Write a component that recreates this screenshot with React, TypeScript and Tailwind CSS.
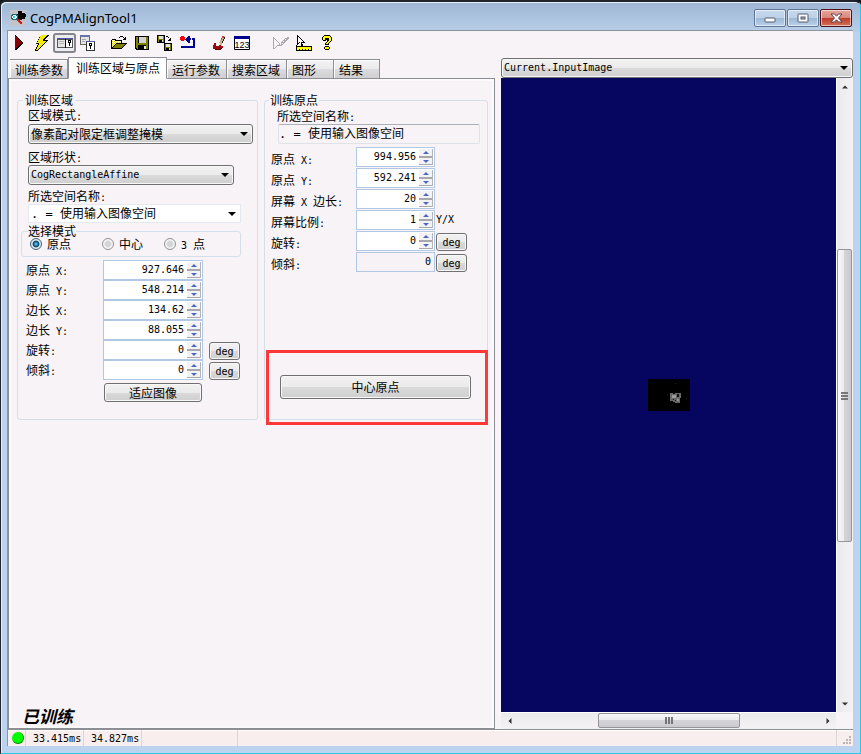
import { useState } from 'react';
import type { ReactNode } from 'react';

const tabs = [
  { label: '训练参数', width: 'w-[58px]' },
  { label: '训练区域与原点', width: 'w-[99px]' },
  { label: '运行参数', width: 'w-[60px]' },
  { label: '搜索区域', width: 'w-[60px]' },
  { label: '图形', width: 'w-[47px]' },
  { label: '结果', width: 'w-[46px]' },
];

const regionRows = [
  { id: 'region-x', label: '原点 X:', value: '927.646' },
  { id: 'region-y', label: '原点 Y:', value: '548.214' },
  { id: 'region-side-x', label: '边长 X:', value: '134.62' },
  { id: 'region-side-y', label: '边长 Y:', value: '88.055' },
  { id: 'region-rotation', label: '旋转:', value: '0', unit: 'deg' },
  { id: 'region-skew', label: '倾斜:', value: '0', unit: 'deg' },
];

const originRows = [
  { id: 'origin-x', label: '原点 X:', value: '994.956' },
  { id: 'origin-y', label: '原点 Y:', value: '592.241' },
  { id: 'origin-screen-x', label: '屏幕 X 边长:', value: '20' },
  { id: 'origin-aspect', label: '屏幕比例:', value: '1', suffix: 'Y/X' },
  { id: 'origin-rotation', label: '旋转:', value: '0', unit: 'deg' },
  { id: 'origin-skew', label: '倾斜:', value: '0', unit: 'deg', readOnly: true },
];

const MONO = "font-['DejaVu_Sans_Mono','Noto_Sans_CJK_SC',monospace]";

const buttonFace =
  'rounded-[3px] border border-[#707070] bg-[linear-gradient(#f3f1f2_0%,#ebebeb_50%,#dadada_50%,#cfcfcf_100%)] shadow-[inset_0_0_0_1px_#f8f8f8]';

// Latin runs are set smaller so they take half the width of a CJK character
function Mixed({ children }: { children: string }) {
  const runs = children.match(/[\x20-\x7e]+|[^\x20-\x7e]+/g) ?? [];
  return (
    <>
      {runs.map((run, i) =>
        run.charCodeAt(0) < 128 ? (
          <span key={i} className={`${MONO} text-[10px] leading-none whitespace-pre`}>{run}</span>
        ) : (
          <span key={i}>{run}</span>
        )
      )}
    </>
  );
}

function Icon({ children, size = 16 }: { children: ReactNode; size?: number }) {
  return (
    <svg className="shrink-0" width={size} height={size} viewBox="0 0 16 16" shapeRendering="crispEdges" aria-hidden="true">
      {children}
    </svg>
  );
}

function AppIcon() {
  return (
    <Icon>
      <path d="M0 0h16v16H0z" fill="#c4c4c8" />
      <path d="M8 1h4v2h3v1h1v3h-1v2h-3v1H9V9H7V4h1z" fill="#000" />
      <path d="M2 4h5v1h1v4H7v1H2V9H1V5h1z" fill="#186878" />
      <path d="M3 5h3v1h1v2H6v1H3V8H2V6h1z" fill="#e8ffff" />
      <path d="M3 6h2v2H3z" fill="#3fd0e0" />
      <path d="M7 9h2v1h1v1h1v1h1v2h-2v-1H9v-1H8v-1H7z" fill="#d01818" />
    </Icon>
  );
}

const icons = {
  run: (
    <Icon>
      <path d="M4 0h1v1h1v1h1v1h1v1h1v1h1v1h1v1h1v2h-1v1h-1v1H9v1H8v1H7v1H6v1H4z" fill="#000" />
      <path d="M4 1h1v1h1v1h1v1h1v1h1v1h1v1h1v1h-1v1H9v1H8v1H7v1H6v1H5v1H4z" fill="#8b0000" />
    </Icon>
  ),
  electric: (
    <Icon>
      <path d="M7 0h8v1h-1v1h-1v1h-1v1h-1v1h3v1h-1v1h-1v1h-1v1h-1v1H9v1H8v1H7v1H6v1H5v1H4v1H1v-2h1v-2h1v-2h1V9H2V8h1V6h1V4h1V2h1V1h1z" fill="#000" />
      <path d="M7 0h6v1h-1v1h-1v1h-1v1H9v2h3v1h-1v1h-1v1H9v1H8v1H7v1H6v1H5v1H4v1H2v-1h1v-2h1v-2h1V8H3V7h1V5h1V3h1V1h1z" fill="#f4ec00" />
    </Icon>
  ),
  panel: (
    <Icon>
      <path d="M0 3h16v10H0z" fill="#555" />
      <path d="M1 5h8v7H1z" fill="#e4e4e4" />
      <path d="M0 3h16v1H0z" fill="#4a5aa0" />
      <path d="M2 6h5v1H2zM2 8h5v1H2z" fill="#b4b4b4" />
      <path d="M9 5h6v7H9z" fill="#fff" />
      <path d="M8 4h1v9H8z" fill="#101010" />
      <path d="M11 5h3v3h-1v3h-1V8h-1z" fill="#000" />
      <path d="M12 6h1v1h-1z" fill="#fff" />
    </Icon>
  ),
  floating: (
    <Icon>
      <path d="M0 0h10v10H0z" fill="#666" />
      <path d="M0 0h10v2H0z" fill="#6474a8" />
      <path d="M1 2h8v7H1z" fill="#e4e4e4" />
      <path d="M2 4h4v1H2zM2 6h3v1H2z" fill="#a8a8a8" />
      <path d="M6 6h9v10H6z" fill="#333" />
      <path d="M6 6h9v1H6z" fill="#4c5c98" />
      <path d="M7 7h7v8H7z" fill="#fff" />
      <path d="M9 8h3v3h-1v3h-1v-3H9z" fill="#000" />
      <path d="M10 9h1v1h-1z" fill="#fff" />
    </Icon>
  ),
  open: (
    <Icon>
      <path d="M0 5h1V4h4v1h6v3h5v1h-1v1h-1v1h-1v1h-1v1h-1v1H0z" fill="#000" />
      <path d="M1 5h3v1h6v2H5v1H4v1H3v1H2v1H1z" fill="#ffffb0" />
      <path d="M1 6h1v1H1zM3 6h1v1H3zM2 7h1v1H2zM4 7h1v1H4zM6 7h1v1H6zM8 7h1v1H8zM1 8h1v1H1zM3 8h1v1H3zM2 9h1v1H2zM1 10h1v1H1z" fill="#e8e000" />
      <path d="M5 9h9v1h-1v1h-1v1h-1v1H2v-1h1v-1h1v-1h1z" fill="#808000" />
      <path d="M9 1h3v1H9zM8 2h1v1H8zM12 2h1v1h-1zM14 2h1v3h-3V4h1V3h1z" fill="#000" />
    </Icon>
  ),
  save: (
    <Icon>
      <path d="M1 1h14v14H2v-1H1z" fill="#000" />
      <path d="M2 2h12v12H3v-1H2z" fill="#808000" />
      <path d="M4 1h8v7H4z" fill="#000" />
      <path d="M5 2h7v6H5z" fill="#d4d4cc" />
      <path d="M4 10h8v4H4z" fill="#000" />
      <path d="M10 11h2v3h-2z" fill="#e8e8e8" />
    </Icon>
  ),
  saveAs: (
    <Icon>
      <path d="M0 0h8v8H0zM7 8h8v8H7z" fill="#000" />
      <path d="M1 1h6v6H1zM8 9h6v6H8z" fill="#808000" />
      <path d="M2 1h4v3H2zM9 9h4v3H9z" fill="#e0e0dc" />
      <path d="M2 5h4v2H2zM9 13h4v2H9z" fill="#000" />
      <path d="M5 5h1v2H5zM12 13h1v2h-1z" fill="#e0e0dc" />
      <path d="M9 1h2v1H9zM11 2h1v1h-1zM13 3h1v3h-3V5h1V4h1z" fill="#000" />
    </Icon>
  ),
  reset: (
    <Icon>
      <path d="M1 1h3v1h1v3H4v1H1V5H0V2h1z" fill="#f00" />
      <path d="M8 1h2v2h1v2h-1v3H8V7H7V6H6V5H5V4h1V3h1V2h1zM12 3h3v10H1v-2h12V5h-1z" fill="#000090" />
    </Icon>
  ),
  brush: (
    <Icon>
      <path d="M12 1h2v3h-1v2h-1v2h-1v2H9V8H8V7h1V5h1V3h1V2h1z" fill="#d0b088" />
      <path d="M11 1h2v2h-2zM10 3h1v2h-1z" fill="#d04040" />
      <path d="M13 2h1v2h-1zM12 4h1v2h-1zM11 6h1v2h-1z" fill="#222" />
      <path d="M3 8h2v3h3v-1h2v1h2v2h-1v1h-1v1H4v-1H2v-4h1z" fill="#980c10" />
      <path d="M4 14h5v1H4zM9 13h2v1H9z" fill="#5a0000" />
    </Icon>
  ),
  results: (
    <svg className="shrink-0" width="16" height="16" viewBox="0 0 16 16" aria-hidden="true">
      <path d="M.5 2.500h15v12H.5z" fill="#fff" stroke="#000" />
      <path d="M0 1h16v3H0z" fill="#00008b" />
      <text x="8" y="12.500" textAnchor="middle" fontSize="9" fontFamily="Liberation Sans, sans-serif" fill="#000">123</text>
    </svg>
  ),
  edit: (
    <Icon>
      <path d="M0 2h1v12H0zM1 3h1v1H1zM2 4h1v1H2zM3 5h1v1H3zM4 6h1v1H4zM5 7h1v1H5zM6 8h1v3H6zM1 13h1v1H1zM2 12h1v1H2zM3 11h1v1H3zM4 10h2v1H4z" fill="#aaa" />
      <path d="M7 10h1V7h1V6h1V5h1V4h1V3h2V2h2v2h-1v1h-1v1h-1v1h-1v1h-1v1h-1v1H9v1H7z" fill="#aaa" />
      <path d="M12 4h1v1h-1zM10 6h1v1h-1zM9 8h1v1H9z" fill="#fff" />
    </Icon>
  ),
  pointer: (
    <Icon>
      <path d="M1 0h1v1h1v1h1v1h1v1h1v1h1v1h1v1h1v1H6v1h1v2H5V9H4V8H3v1H2v1H1z" fill="#000" />
      <path d="M2 2h1v1h1v1h1v1h1v1h1v1H5v2H4V7H3v1H2z" fill="#fff" />
      <path d="M0 10h1v1h15v5H0z" fill="#000" />
      <path d="M1 12h14v3H1z" fill="#ff0" />
      <path d="M3 14h1v1H3zM6 14h1v1H6zM9 14h1v1H9zM12 14h1v1h-1z" fill="#000" />
    </Icon>
  ),
  help: (
    <Icon>
      <path d="M5 0h6v1h1v1h1v4h-1v1h-1v1h-1v2H6V8h1V7h1V5H7v1H4V5H3V2h1V1h1zM6 11h4v1h1v2h-1v1H6v-1H5v-2h1z" fill="#000" />
      <path d="M5 1h6v1h1v4h-1v1h-1v1H9v1H7V8h1V7h1V6h1V3H6v2H4V2h1zM6 12h4v2H6z" fill="#ff0" />
    </Icon>
  ),
};

const toolbar = [
  { name: '运行', icon: icons.run, margin: '' },
  { name: '自动运行', icon: icons.electric, margin: '' },
  { name: '显示面板', icon: icons.panel, margin: '', pressed: true },
  { name: '浮动窗口', icon: icons.floating, margin: '' },
  { name: '打开', icon: icons.open, margin: 'ml-2' },
  { name: '保存', icon: icons.save, margin: '' },
  { name: '另存为', icon: icons.saveAs, margin: '' },
  { name: '重置', icon: icons.reset, margin: '' },
  { name: '绘制', icon: icons.brush, margin: 'ml-2' },
  { name: '数值', icon: icons.results, margin: '' },
  { name: '编辑', icon: icons.edit, margin: 'ml-4' },
  { name: '提示', icon: icons.pointer, margin: '' },
  { name: '帮助', icon: icons.help, margin: '' },
];

function TitleBar() {
  const face = 'flex h-[18px] w-8 items-center justify-center rounded-[2px] border shadow-[inset_0_0_0_1px_rgba(255,255,255,0.55)]';
  const plain = 'border-[#5e7796] bg-[linear-gradient(#c5d8ec_0%,#bdd1e7_48%,#9db8d5_50%,#b9d0ea_100%)]';
  return (
    <header className="flex h-7 items-center justify-between pt-1 pr-px pl-[3px]">
      <div className="flex items-center gap-1">
        <AppIcon />
        <h1 className="font-['Noto_Sans',sans-serif] text-[13px] leading-4 text-black">CogPMAlignTool1</h1>
      </div>
      <div className="flex gap-px">
        <button aria-label="最小化" className={`${face} ${plain}`}>
          <svg className="mt-1" width="12" height="6" viewBox="0 0 12 6"><rect x="1" y="1" width="10" height="4" rx=".5" fill="#fff" stroke="#555a6c" /></svg>
        </button>
        <button aria-label="最大化" className={`${face} ${plain}`}>
          <svg width="12" height="10" viewBox="0 0 12 10">
            <rect x="1" y="1" width="10" height="8" rx=".5" fill="#fff" stroke="#555a6c" />
            <rect x="4" y="4" width="4" height="2" fill="#9db8d5" stroke="#555a6c" />
          </svg>
        </button>
        <button aria-label="关闭" className={`${face} border-[#4c1018] bg-[linear-gradient(#e8a79b_0%,#d9877a_48%,#bd3a28_50%,#d27358_100%)]`}>
          <svg width="13" height="10" viewBox="0 0 13 10">
            <path d="M1 1h3.500l2 2.200 2-2.200H12L8.500 5 12 9H8.500l-2-2.200-2 2.200H1l3.500-4z" fill="#fff" stroke="#5a4450" />
          </svg>
        </button>
      </div>
    </header>
  );
}

function Arrow({ dir = 'down', size = 8, className = '' }: { dir?: string; size?: number; className?: string }) {
  const paths: Record<string, string> = {
    down: 'M0 2h8L4 6z',
    up: 'M0 6h8L4 2z',
    left: 'M6 0v8L2 4z',
    right: 'M2 0v8l4-4z',
  };
  return (
    <svg className={className} width={size} height={size} viewBox="0 0 8 8" aria-hidden="true">
      <path d={paths[dir]} fill="currentColor" />
    </svg>
  );
}

function Dropdown({ id, value, label, className = '' }: { id: string; value: string; label?: string; className?: string }) {
  return (
    <div className={`relative ${className}`}>
      <select id={id} aria-label={label} className="block h-full w-full appearance-none rounded-[inherit] bg-transparent pr-5 pl-[2px] outline-none">
        <option>{value}</option>
      </select>
      <Arrow className="pointer-events-none absolute top-1/2 right-1 -translate-y-1/2" />
    </div>
  );
}

function Spinner({ id, value, readOnly }: { id: string; value: string; readOnly?: boolean }) {
  const step = 'flex h-2 w-full items-center justify-center bg-[#f3f2f5] text-[#4c66c4]';
  return (
    <div className={`flex h-5 border border-[#b0c8e4] ${readOnly ? 'bg-[#f6f2f6]' : 'bg-white'}`}>
      <input
        id={id}
        defaultValue={value}
        readOnly={readOnly}
        className={`${MONO} w-0 min-w-0 flex-1 bg-transparent pr-[3px] text-right text-[10px] outline-none`}
      />
      {!readOnly && (
        <div className="my-px mr-px flex w-[14px] flex-col justify-between border-r border-[#b4b4b8]">
          <button aria-label="增加" className={`${step} border-b border-[#a8a8ac]`}>
            <svg width="6" height="3" viewBox="0 0 6 3"><path d="M0 3h6L3 0z" fill="currentColor" /></svg>
          </button>
          <button aria-label="减少" className={`${step} border-y border-[#a8a8ac]`}>
            <svg width="6" height="3" viewBox="0 0 6 3"><path d="M0 0h6L3 3z" fill="currentColor" /></svg>
          </button>
        </div>
      )}
    </div>
  );
}

function DegButton() {
  return <button className={`${buttonFace} ${MONO} mt-[2px] h-[18px] w-[31px] pt-px text-[10px] leading-4`}>deg</button>;
}

function RegionGroup() {
  const [mode, setMode] = useState('原点');
  return (
    <fieldset className="w-[241px] rounded-[3px] border border-[#d5dfe9] pr-1 pb-[17px] pl-[3px]">
      <legend className="ml-[2px] px-[2px] leading-3">训练区域</legend>
      <div className="pl-[7px]">
        <label htmlFor="region-mode" className="mt-px block h-4 leading-4"><Mixed>区域模式:</Mixed></label>
        <Dropdown id="region-mode" value="像素配对限定框调整掩模" className={`${buttonFace} mt-px h-5`} />
        <label htmlFor="region-shape" className="mt-[5px] block h-4 leading-4"><Mixed>区域形状:</Mixed></label>
        <Dropdown id="region-shape" value="CogRectangleAffine" className={`${buttonFace} ${MONO} mr-[19px] h-5 text-[10px]`} />
        <label htmlFor="region-space" className="mt-[3px] block h-4 leading-4"><Mixed>所选空间名称:</Mixed></label>
        <Dropdown id="region-space" value=". = 使用输入图像空间" className={`${MONO} mr-3 h-[19px] border border-[#e4e8f0] bg-white`} />
      </div>
      <fieldset className="mt-[2px] mr-3 flex rounded-[3px] border border-[#d5dfe9] pb-[5px] pl-2">
        <legend className="ml-[-2px] leading-3">选择模式</legend>
        {['原点', '中心', '3 点'].map((item, i) => (
          <label key={item} className={`flex h-[14px] items-center gap-[5px] ${i < 2 ? (i === 0 ? 'w-[72px]' : 'w-[62px]') : ''}`}>
            <input
              type="radio"
              name="mode"
              checked={mode === item}
              onChange={() => setMode(item)}
              className="h-3 w-3 appearance-none rounded-full border border-[#8e8f8f] bg-[radial-gradient(circle,#d2d4d8_35%,#f8f8f8_60%)] checked:border-[#43606f] checked:bg-[radial-gradient(circle,#46b4e8_10%,#0b3f63_40%,#dfeaf2_55%)]"
            />
            <span><Mixed>{item}</Mixed></span>
          </label>
        ))}
      </fieldset>
      <div className="mt-[3px] pl-[5px]">
        {regionRows.map((row) => (
          <div key={row.id} className="flex h-5">
            <label htmlFor={row.id} className="w-[77px] leading-5"><Mixed>{row.label}</Mixed></label>
            <div className="mr-[6px] w-[100px]"><Spinner id={row.id} value={row.value} /></div>
            {row.unit && <DegButton />}
          </div>
        ))}
        <button className={`${buttonFace} mt-[3px] ml-[78px] block h-[19px] w-[98px] leading-4`}>适应图像</button>
      </div>
    </fieldset>
  );
}

function OriginGroup() {
  return (
    <fieldset className="flex w-[224px] flex-col rounded-[3px] border border-[#d5dfe9] px-[6px]">
      <legend className="ml-[-2px] px-px leading-3">训练原点</legend>
      <label htmlFor="origin-space" className="mt-[2px] ml-[6px] h-4 leading-4"><Mixed>所选空间名称:</Mixed></label>
      <input
        id="origin-space"
        readOnly
        defaultValue=". = 使用输入图像空间"
        className={`${MONO} mr-px ml-[7px] h-5 rounded-[2px] border border-[#e0e2ea] border-t-[#aeb0b8] bg-transparent pb-1 outline-none`}
      />
      <div className="mt-[3px] flex flex-col gap-px">
        {originRows.map((row) => (
          <div key={row.id} className="flex h-5">
            <label htmlFor={row.id} className="w-[85px] pt-1 leading-4"><Mixed>{row.label}</Mixed></label>
            <div className="mr-px w-[79px]"><Spinner id={row.id} value={row.value} readOnly={row.readOnly} /></div>
            {row.unit && <DegButton />}
            {row.suffix && <span className={`${MONO} text-[10px] leading-5`}>{row.suffix}</span>}
          </div>
        ))}
      </div>
      <div className="relative mt-auto mr-[10px] mb-5 ml-[9px]">
        <button className={`${buttonFace} block h-6 w-full`}>中心原点</button>
        {/* Highlight frame around the button */}
        <div className="pointer-events-none absolute -top-[25px] -right-[17px] -bottom-[26px] -left-[14px] border-3 border-[#ff3838]" />
      </div>
    </fieldset>
  );
}

function ToolPanel() {
  const [active, setActive] = useState(1);
  return (
    <section className="flex flex-col pr-[6px]">
      <div role="tablist" className="z-10 -mb-px flex h-[22px] items-end pl-[2px]">
        {tabs.map((tab, i) => (
          <button
            key={tab.label}
            role="tab"
            aria-selected={active === i}
            onClick={() => setActive(i)}
            className={`${tab.width} border border-[#8c8e94] text-left ${
              active === i
                ? 'h-[22px] border-b-white bg-white pl-[7px]'
                : 'h-[20px] border-l-0 bg-[linear-gradient(#f4f2f4_0%,#ebebeb_50%,#dcdcde_50%,#d0d0d4_100%)] pt-px pl-[5px] shadow-[inset_1px_1px_0_#fcfcfc]'
            }`}
          >
            {tab.label}
          </button>
        ))}
      </div>
      <div className="flex flex-1 flex-col justify-between border border-[#8c8e94] bg-[#f7f3f7] shadow-[inset_0_0_0_2px_#fbf9fb]">
        <div className="flex items-stretch gap-[6px] pt-[15px] pl-2">
          <RegionGroup />
          <OriginGroup />
        </div>
        <p className="pb-1 pl-[13px] text-[17px] leading-4 font-bold italic">已训练</p>
      </div>
    </section>
  );
}

function DisplayPanel() {
  return (
    <section className="flex min-w-0 flex-col">
      <Dropdown id="image" label="图像" value="Current.InputImage" className={`${buttonFace} ${MONO} mt-px h-5 text-[10px]`} />
      <div className="grid flex-1 grid-cols-[1fr_17px] grid-rows-[1fr_17px]">
        <div className="flex items-center justify-center bg-[#060660]">
          <svg width="42" height="32" viewBox="0 0 42 32" shapeRendering="crispEdges" aria-hidden="true">
            <path d="M0 0h42v32H0z" fill="#000" />
            <path d="M22 14h11v5h-1v5h-5v-1h-2v-1h-3z" fill="#666" />
            <path d="M24 16h4v3h-4zM29 20h2v2h-2z" fill="#999" />
            <path d="M25 14h2v1h-2zM29 15h2v3h-2zM25 20h1v1h-1zM27 21h1v1h-1z" fill="#111" />
            <path d="M19 15h1v1h-1zM27 4h1v1h-1zM38 19h1v1h-1z" fill="#222" />
          </svg>
        </div>
        <div className="flex flex-col border-l border-white bg-[linear-gradient(90deg,#eaeaec,#f4f2f4)] text-[#333]">
          <div className="flex h-[17px] items-center justify-center"><Arrow dir="up" size={6} /></div>
          <div className="flex-[155]" />
          <div className="mr-px flex flex-[291] flex-col items-center justify-center gap-px rounded-[2px] border border-[#959599] bg-[linear-gradient(90deg,#f7f7f7_0%,#ececee_48%,#d4d4d8_50%,#c9c9cf_100%)]">
            <i className="h-[2px] w-[7px] bg-[#77777a]" />
            <i className="h-[2px] w-[7px] bg-[#77777a]" />
            <i className="h-[2px] w-[7px] bg-[#77777a]" />
          </div>
          <div className="flex-[154]" />
          <div className="flex h-[17px] items-center justify-center"><Arrow size={6} /></div>
        </div>
        <div className="flex border-t border-white bg-[linear-gradient(#eaeaec,#f4f2f4)] text-[#333]">
          <div className="flex w-[17px] items-center justify-center"><Arrow dir="left" size={6} /></div>
          <div className="flex-[81]" />
          <div className="mb-px flex flex-[140] items-center justify-center gap-px rounded-[2px] border border-[#959599] bg-[linear-gradient(#f7f7f7_0%,#ececee_48%,#d4d4d8_50%,#c9c9cf_100%)]">
            <i className="h-[7px] w-[2px] bg-[#77777a]" />
            <i className="h-[7px] w-[2px] bg-[#77777a]" />
            <i className="h-[7px] w-[2px] bg-[#77777a]" />
          </div>
          <div className="flex-[80]" />
          <div className="flex w-[17px] items-center justify-center"><Arrow dir="right" size={6} /></div>
        </div>
      </div>
    </section>
  );
}

function StatusBar() {
  return (
    <footer className={`${MONO} flex h-[17px] border-t border-[#8c8e94] bg-[#f7eeed] text-[10px] leading-4 shadow-[inset_0_1px_0_#fff]`}>
      <div className="flex w-[18px] items-center border-r border-[#dcd6d6] pl-1">
        <span className="h-3 w-3 rounded-full border-r border-b border-[#088808] bg-[#0f0]" />
      </div>
      <div className="w-[58px] border-r border-[#dcd6d6] pt-px pl-[7px]">33.415ms</div>
      <div className="w-[58px] border-r border-[#dcd6d6] pt-px pl-[7px]">34.827ms</div>
      <div className="w-24 border-r border-[#dcd6d6]" />
      <div className="flex-1 border-r border-[#dcd6d6]" />
      <div className="flex w-4 items-end justify-end pr-[2px] pb-[2px]">
        <svg width="8" height="8" viewBox="0 0 8 8" fill="#b8b4b8" aria-hidden="true">
          <path d="M6 0h2v2H6zM3 3h2v2H3zM6 3h2v2H6zM0 6h2v2H0zM3 6h2v2H3zM6 6h2v2H6z" />
        </svg>
      </div>
    </footer>
  );
}

export default function App() {
  return (
    <div className="min-h-screen bg-[#15151c] font-['Noto_Sans_CJK_SC',sans-serif] text-xs leading-4 text-black">
      <div className="flex min-h-screen flex-col rounded-t-[6px] border border-t-2 border-[#20222c] border-r-[#28c8ea] border-b-[#28c8ea] bg-[#bcd3ef] bg-[linear-gradient(#9eb6d4_0px,#b9cfe8_30px,#bcd3ef_31px)] pr-[7px] pb-[7px] pl-[6px] shadow-[inset_1px_1px_0_#e6f0fa]">
        <TitleBar />
        <main className="flex flex-1 flex-col border border-r-0 border-b-0 border-[#8c949c] bg-[#f7f3f7]">
          <div className="-ml-px flex h-[26px] items-start pt-[2px]">
            {toolbar.map((tool) => (
              <button
                key={tool.name}
                aria-label={tool.name}
                className={`flex h-5 w-[23px] items-center justify-center ${tool.margin} ${
                  tool.pressed ? 'rounded-[3px] border-2 border-[#86868c] bg-[#ececf0]' : ''
                }`}
              >
                {tool.icon}
              </button>
            ))}
          </div>
          <div className="grid flex-1 grid-cols-[493fr_352fr]">
            <ToolPanel />
            <DisplayPanel />
          </div>
          <StatusBar />
        </main>
      </div>
    </div>
  );
}
